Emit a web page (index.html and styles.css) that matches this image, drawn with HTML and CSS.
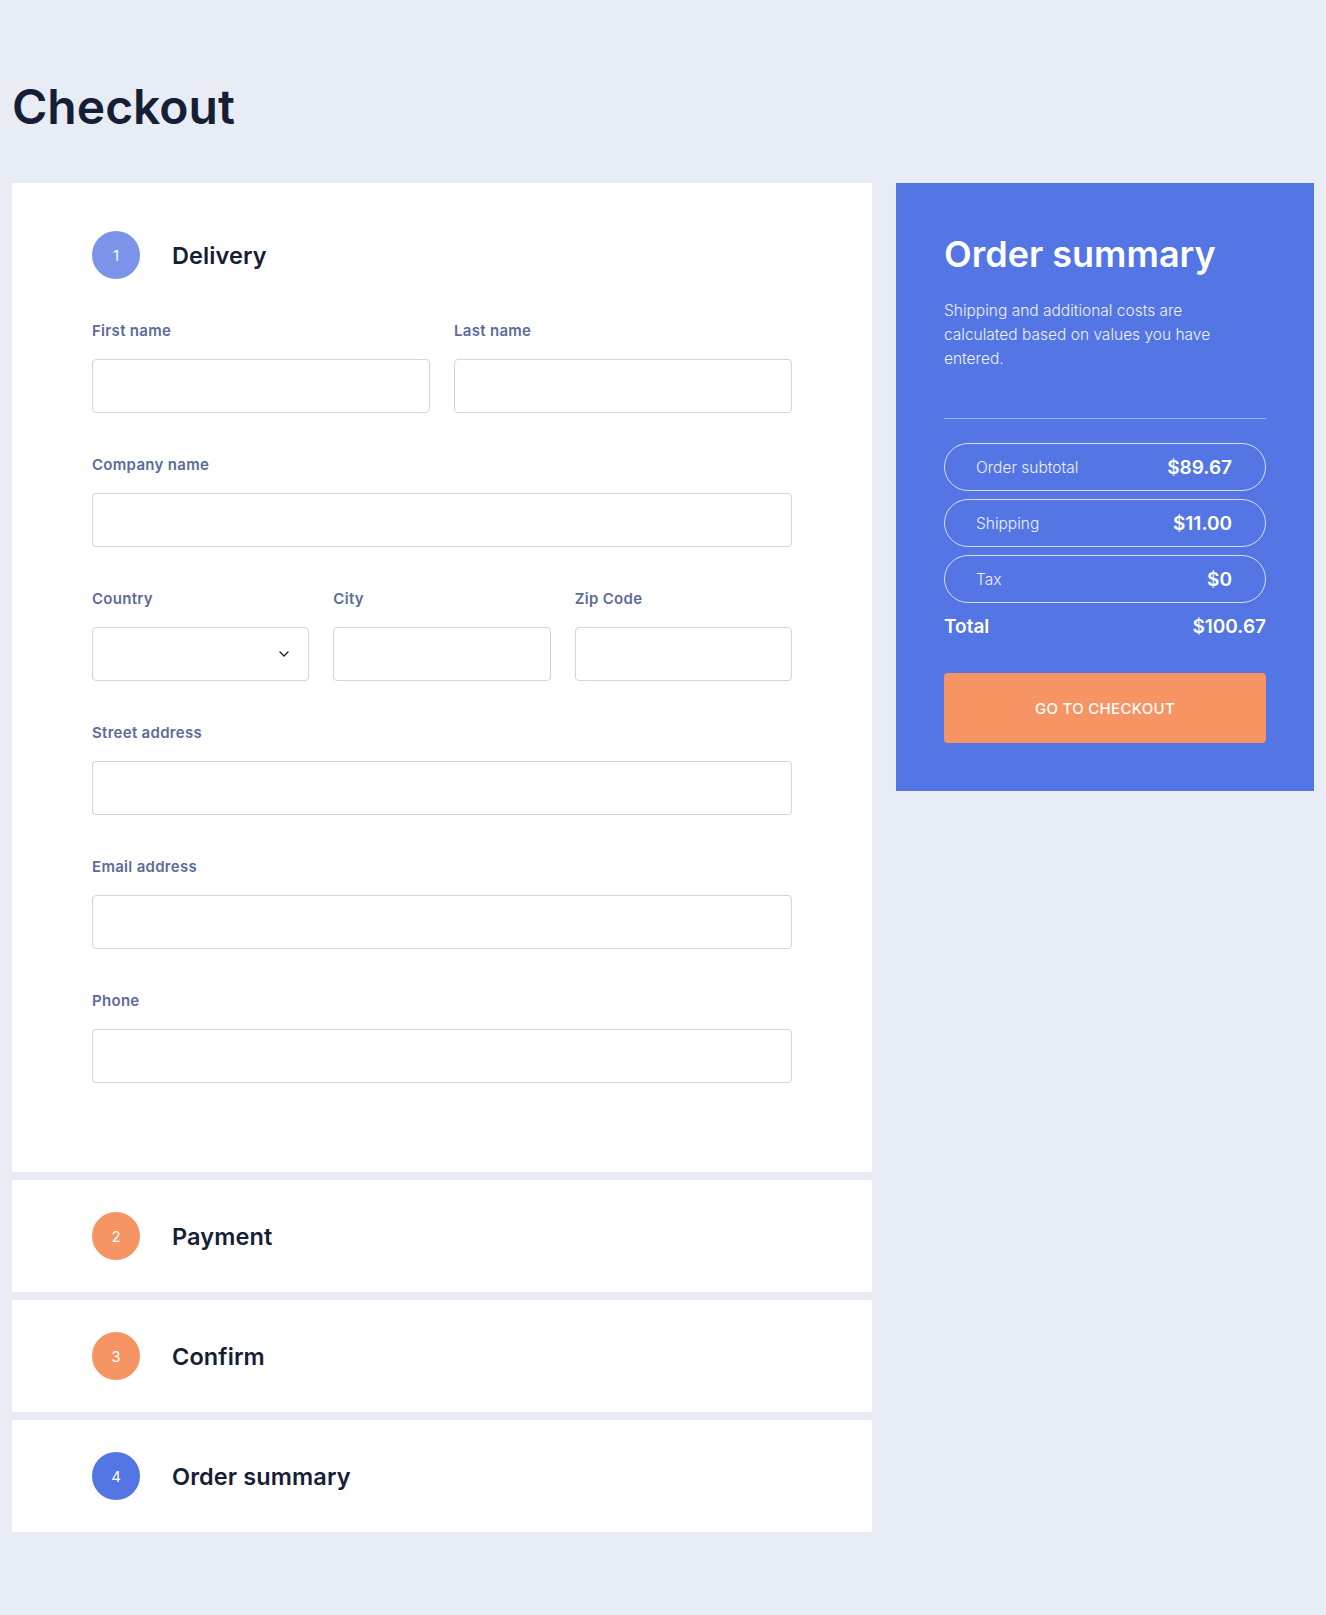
FILE: index.html
```html
<!DOCTYPE html>
<html lang="en">
<head>
<meta charset="utf-8">
<title>Checkout</title>
<link rel="stylesheet" href="styles.css">
</head>
<body>
<div class="page">
  <h1 class="page-title">Checkout</h1>
  <div class="layout">
    <div class="steps">
      <section class="card card-delivery">
        <div class="step-head">
          <span class="step-num num-light">1</span>
          <h2 class="step-title">Delivery</h2>
        </div>
        <form class="form">
          <div class="row row-2">
            <label class="field"><span class="label">First name</span><input class="input" type="text"></label>
            <label class="field"><span class="label">Last name</span><input class="input" type="text"></label>
          </div>
          <div class="row">
            <label class="field"><span class="label">Company name</span><input class="input" type="text"></label>
          </div>
          <div class="row row-3">
            <label class="field"><span class="label">Country</span>
              <span class="select">
                <svg class="chev" width="10" height="6" viewBox="0 0 10 6"><path d="M1 1l4 4 4-4" fill="none" stroke="#1a2238" stroke-width="1.4" stroke-linecap="round" stroke-linejoin="round"/></svg>
              </span>
            </label>
            <label class="field"><span class="label">City</span><input class="input" type="text"></label>
            <label class="field"><span class="label">Zip Code</span><input class="input" type="text"></label>
          </div>
          <div class="row">
            <label class="field"><span class="label">Street address</span><input class="input" type="text"></label>
          </div>
          <div class="row">
            <label class="field"><span class="label">Email address</span><input class="input" type="text"></label>
          </div>
          <div class="row">
            <label class="field"><span class="label">Phone</span><input class="input" type="text"></label>
          </div>
        </form>
      </section>
      <section class="card card-step">
        <div class="step-head">
          <span class="step-num num-orange">2</span>
          <h2 class="step-title">Payment</h2>
        </div>
      </section>
      <section class="card card-step">
        <div class="step-head">
          <span class="step-num num-orange">3</span>
          <h2 class="step-title">Confirm</h2>
        </div>
      </section>
      <section class="card card-step">
        <div class="step-head">
          <span class="step-num num-blue">4</span>
          <h2 class="step-title">Order summary</h2>
        </div>
      </section>
    </div>
    <aside class="summary">
      <h2 class="summary-title">Order summary</h2>
      <p class="summary-desc">Shipping and additional costs are calculated based on values you have entered.</p>
      <hr class="divider">
      <div class="pills">
        <div class="pill"><span class="pill-label">Order subtotal</span><span class="pill-value">$89.67</span></div>
        <div class="pill"><span class="pill-label">Shipping</span><span class="pill-value">$11.00</span></div>
        <div class="pill"><span class="pill-label">Tax</span><span class="pill-value">$0</span></div>
      </div>
      <div class="total"><span>Total</span><span>$100.67</span></div>
      <button class="btn" type="button">GO TO CHECKOUT</button>
    </aside>
  </div>
</div>
</body>
</html>
```

FILE: styles.css
```css
* { box-sizing: border-box; }
html, body { margin: 0; padding: 0; }
body {
  background: #e8ecf5;
  font-family: "Inter", "Liberation Sans", sans-serif;
  color: #161e36;
  min-height: 1615px;
}
.page { padding: 0 12px; }
.page-title {
  margin: 0;
  padding-top: 79px;
  height: 183px;
  font-size: 48px;
  line-height: 56px;
  font-weight: 600;
  letter-spacing: 0;
  color: #161e36;
}
.layout {
  display: flex;
  gap: 24px;
  align-items: flex-start;
}
.steps {
  width: 860px;
  display: flex;
  flex-direction: column;
  gap: 8px;
}
.card { background: #fff; }
.card-delivery { padding: 48px 80px 89px; }
.card-step { padding: 32px 80px; height: 112px; }
.step-head {
  display: flex;
  align-items: center;
  gap: 32px;
  height: 48px;
}
.step-num {
  width: 48px;
  height: 48px;
  border-radius: 50%;
  display: flex;
  align-items: center;
  justify-content: center;
  color: #fff;
  font-size: 15px;
  font-weight: 400;
  flex: none;
}
.num-light { background: #7b93e8; }
.num-orange { background: #f69463; }
.num-blue { background: #5476e4; }
.step-title {
  margin: 0;
  font-size: 23.5px;
  font-weight: 600;
  color: #161e36;
  letter-spacing: 0.1px;
}
.form {
  margin-top: 42px;
  display: flex;
  flex-direction: column;
  gap: 42px;
}
.row { display: grid; grid-template-columns: 1fr; gap: 24px; }
.row-2 { grid-template-columns: 1fr 1fr; }
.row-3 { grid-template-columns: 1fr 1fr 1fr; }
.field { display: flex; flex-direction: column; }
.label {
  font-size: 15px;
  line-height: 20px;
  font-weight: 600;
  letter-spacing: 0.3px;
  color: #5c6c99;
  margin-bottom: 18px;
}
.input, .select {
  display: block;
  width: 100%;
  height: 54px;
  border: 1px solid #cfd5e6;
  border-radius: 4px;
  background: #fff;
  font: inherit;
  outline: none;
}
.select {
  display: flex;
  align-items: center;
  justify-content: flex-end;
  padding-right: 19px;
}
.chev { display: block; }
.summary {
  width: 418px;
  background: #5476e4;
  color: #fff;
  padding: 48px 48px 48px;
}
.summary-title {
  margin: 0;
  font-size: 36px;
  line-height: 46px;
  font-weight: 600;
  letter-spacing: 0;
}
.summary-desc {
  margin: 22px 0 0;
  max-width: 280px;
  font-size: 15.5px;
  line-height: 24px;
  font-weight: 300;
  color: #eef1fc;
}
.divider {
  margin: 47px 0 24px;
  border: 0;
  border-top: 1px solid rgba(255,255,255,0.45);
  height: 0;
}
.pills { display: flex; flex-direction: column; gap: 8px; }
.pill {
  height: 48px;
  border: 1px solid rgba(255,255,255,0.75);
  border-radius: 24px;
  display: flex;
  align-items: center;
  justify-content: space-between;
  padding: 0 33px 0 31px;
}
.pill-label { font-size: 15.5px; font-weight: 300; color: #eef1fc; }
.pill-value { font-size: 19px; font-weight: 600; }
.total {
  display: flex;
  justify-content: space-between;
  align-items: center;
  margin-top: 10px;
  height: 26px;
  font-size: 19px;
  font-weight: 600;
}
.btn {
  margin-top: 34px;
  display: block;
  width: 100%;
  height: 70px;
  border: 0;
  border-radius: 4px;
  background: #f69463;
  color: #fff;
  font-family: inherit;
  font-size: 15px;
  font-weight: 500;
  letter-spacing: 0.3px;
  cursor: pointer;
}
```
